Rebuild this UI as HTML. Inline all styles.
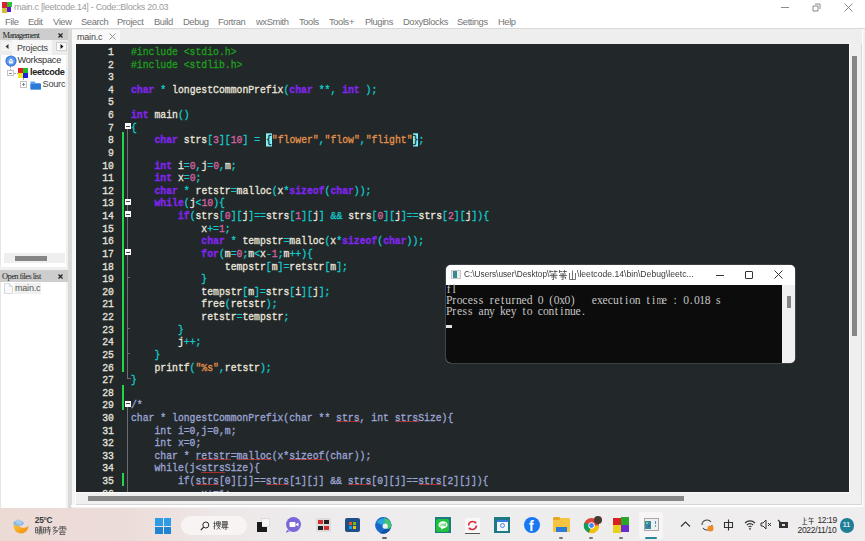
<!DOCTYPE html>
<html><head><meta charset="utf-8">
<style>
*{margin:0;padding:0;box-sizing:border-box}
html,body{width:865px;height:541px;overflow:hidden;background:#f0f0f0;font-family:"Liberation Sans",sans-serif}
.a{position:absolute}
.t{position:absolute;white-space:pre;line-height:1}
#title{left:0;top:0;width:865px;height:14px;background:#fff}
#menu{left:0;top:14px;width:865px;height:14px;background:#fff}
.mi{position:absolute;top:2.6px;font-size:9.4px;color:#767676;white-space:pre;line-height:10px;letter-spacing:-0.4px}
#code{left:76px;top:44px;width:773px;height:448px;background:#222829;overflow:hidden}
.ln{position:absolute;left:0;width:38px;text-align:right;font-family:"Liberation Mono",monospace;font-size:9.8px;color:#e6e2dc;line-height:12.62px;height:12.62px;transform:translateY(1.3px) scaleY(1.2);transform-origin:0 0;-webkit-text-stroke:0.28px currentColor}
.cl{position:absolute;left:55px;font-family:"Liberation Mono",monospace;font-size:9.78px;color:#ebe6de;line-height:12.62px;height:12.62px;white-space:pre;transform:translateY(1.3px) scaleY(1.2);transform-origin:0 0;-webkit-text-stroke:0.28px currentColor}
.k{color:#8224f0;font-weight:bold}
.o{color:#12c9cc}
.n{color:#d2629f}
.s{color:#e3904c}
.p{color:#1e9e1e}
.c{color:#9ca4d4}
.cu{color:#9ca4d4;text-decoration:underline wavy #c03030;text-decoration-thickness:1px;text-underline-offset:1px}
.cons i{position:absolute;width:5.39px;text-align:center;font-style:normal;font-family:"Liberation Serif",serif;font-size:11.6px;line-height:11px;color:#c4c4c4;white-space:pre}
</style></head><body>

<!-- title bar -->
<div id="title" class="a">
  <div class="a" style="left:1.5px;top:2px;width:5.3px;height:5.5px;background:#d82030"></div>
  <div class="a" style="left:6.8px;top:2.2px;width:4.8px;height:5px;background:#30c038"></div>
  <div class="a" style="left:1.8px;top:7.5px;width:5px;height:5.3px;background:#d0c030"></div>
  <div class="a" style="left:6.8px;top:7.2px;width:4.5px;height:4.5px;background:#5a14d8"></div>
  <div class="t" style="left:14px;top:3.3px;font-size:9px;color:#9b9b9b;letter-spacing:-0.3px">main.c [leetcode.14] - Code::Blocks 20.03</div>
  <div class="a" style="left:781px;top:7px;width:8px;height:1px;background:#8a8a8a"></div>
  <svg class="a" style="left:812px;top:3px" width="9" height="9" viewBox="0 0 9 9"><path d="M1 3h5v5h-5z M3 1h5v5" stroke="#7a7a7a" stroke-width="0.9" fill="none"/></svg>
  <svg class="a" style="left:843.5px;top:3px" width="9" height="9" viewBox="0 0 9 9"><path d="M0.5 0.5L8.5 8.5M8.5 0.5L0.5 8.5" stroke="#7a7a7a" stroke-width="0.9"/></svg>
</div>

<!-- menu -->
<div id="menu" class="a">
  <span class="mi" style="left:5px">File</span>
  <span class="mi" style="left:28px">Edit</span>
  <span class="mi" style="left:53px">View</span>
  <span class="mi" style="left:81px">Search</span>
  <span class="mi" style="left:117px">Project</span>
  <span class="mi" style="left:154px">Build</span>
  <span class="mi" style="left:183px">Debug</span>
  <span class="mi" style="left:218px">Fortran</span>
  <span class="mi" style="left:256px">wxSmith</span>
  <span class="mi" style="left:299px">Tools</span>
  <span class="mi" style="left:329px">Tools+</span>
  <span class="mi" style="left:365px">Plugins</span>
  <span class="mi" style="left:403px">DoxyBlocks</span>
  <span class="mi" style="left:457px">Settings</span>
  <span class="mi" style="left:498px">Help</span>
</div>
<div class="a" style="left:0;top:28px;width:865px;height:1px;background:#d8d8d8"></div>

<!-- left management panel -->
<div class="a" style="left:0;top:29px;width:68px;height:11px;background:#cdcdcd"></div>
<div class="t" style="left:2.5px;top:31.8px;font-family:'Liberation Serif',serif;font-size:8.4px;color:#1e1e1e;letter-spacing:-0.7px">Management</div>
<svg class="a" style="left:57.5px;top:32.5px" width="5" height="5" viewBox="0 0 5 5"><path d="M0.5 0.5L4.5 4.5M4.5 0.5L0.5 4.5" stroke="#1a1a1a" stroke-width="1.1"/></svg>
<div class="a" style="left:0;top:40px;width:68px;height:15px;background:#ececec"></div>
<div class="a" style="left:1px;top:42px;width:11px;height:9px;background:#f4f4f4"></div>
<svg class="a" style="left:5px;top:44px" width="4" height="5" viewBox="0 0 4 5"><path d="M3.5 0L0.5 2.5L3.5 5z" fill="#333"/></svg>
<div class="a" style="left:12px;top:40px;width:40px;height:15px;background:#f7f7f7"></div>
<div class="t" style="left:17px;top:43.5px;font-size:9px;color:#444;letter-spacing:-0.2px">Projects</div>
<div class="a" style="left:56px;top:42px;width:10.5px;height:9px;background:#fbfbfb;border:1px solid #d0d0d0"></div>
<svg class="a" style="left:60px;top:44px" width="4" height="5" viewBox="0 0 4 5"><path d="M0.5 0L3.5 2.5L0.5 5z" fill="#111"/></svg>
<div class="a" style="left:0;top:55px;width:68px;height:212px;background:#fff"></div>
<!-- tree -->
<div class="a" style="left:10px;top:66px;width:1px;height:8px;border-left:1px dotted #aaa"></div>
<svg class="a" style="left:4.5px;top:54.5px" width="12" height="12" viewBox="0 0 12 12"><circle cx="6" cy="6" r="5.6" fill="#3a78d8"/><circle cx="6" cy="6" r="4.4" fill="#5a98ee"/><path d="M3 6.2L6 3.4L9 6.2M4 5.6v3h4v-3" fill="#fff"/></svg>
<div class="t" style="left:17.5px;top:56px;font-size:9.2px;color:#333;letter-spacing:-0.25px">Workspace</div>
<div class="a" style="left:17.5px;top:67.5px;width:5.25px;height:5.25px;background:#e02020"></div>
<div class="a" style="left:22.75px;top:67.5px;width:5.25px;height:5.25px;background:#20c020"></div>
<div class="a" style="left:17.5px;top:72.75px;width:5.25px;height:5.25px;background:#f0e820"></div>
<div class="a" style="left:22.75px;top:72.75px;width:5.25px;height:5.25px;background:#2020e0"></div>
<div class="t" style="left:30px;top:68px;font-size:9.2px;color:#222;font-weight:bold;letter-spacing:-0.35px">leetcode</div>
<div class="a" style="left:7px;top:69.5px;width:6.5px;height:6.5px;border:1px solid #c4c4c4;background:#fff"></div>
<div class="a" style="left:8.5px;top:72.5px;width:3.5px;height:1px;background:#888"></div>
<div class="a" style="left:13.5px;top:73px;width:4px;height:1px;border-top:1px dotted #aaa"></div>
<div class="a" style="left:10px;top:77px;width:1px;height:0px"></div>
<div class="a" style="left:23px;top:78px;width:1px;height:4px;border-left:1px dotted #aaa"></div>
<svg class="a" style="left:29.5px;top:79.5px" width="12" height="10" viewBox="0 0 12 10"><path d="M0.5 1.5h4l1 1.5h5v6.5h-10z" fill="#5aa0ea"/><path d="M0.5 4h10.5v5.5h-10.5z" fill="#2a7ad8"/></svg>
<div class="t" style="left:42.5px;top:80px;font-size:9.2px;color:#444;letter-spacing:-0.25px">Sourc</div>
<div class="a" style="left:20px;top:81px;width:6.5px;height:6.5px;border:1px solid #c4c4c4;background:#fff"></div>
<div class="a" style="left:21.5px;top:84px;width:3.5px;height:1px;background:#888"></div>
<div class="a" style="left:22.75px;top:82.5px;width:1px;height:3.5px;background:#888"></div>
<!-- left hscroll -->
<div class="a" style="left:4px;top:253px;width:61px;height:10px;background:#efefef"></div>
<div class="a" style="left:15px;top:256px;width:32px;height:5px;background:#858585"></div>
<!-- open files list -->
<div class="a" style="left:0;top:270px;width:68px;height:12px;background:#cdcdcd"></div>
<div class="t" style="left:2px;top:272.8px;font-family:'Liberation Serif',serif;font-size:8.4px;color:#1e1e1e;letter-spacing:-0.55px">Open files list</div>
<svg class="a" style="left:57.5px;top:273.5px" width="5" height="5" viewBox="0 0 5 5"><path d="M0.5 0.5L4.5 4.5M4.5 0.5L0.5 4.5" stroke="#1a1a1a" stroke-width="1.1"/></svg>
<div class="a" style="left:0;top:282px;width:68px;height:226px;background:#fff"></div>
<svg class="a" style="left:3.5px;top:283px" width="9" height="11" viewBox="0 0 9 11"><path d="M0.5 0.5h5l3 3v7h-8z" fill="#fafafa" stroke="#c6ccd4" stroke-width="0.7"/><path d="M5.5 0.5v3h3" fill="#dde4ec" stroke="#c6ccd4" stroke-width="0.6"/></svg>
<div class="a" style="left:14px;top:283px;width:27px;height:11px;background:#f0f0f0"></div>
<div class="t" style="left:15px;top:284px;font-size:9px;color:#555;letter-spacing:-0.2px">main.c</div>

<!-- editor notebook -->
<div class="a" style="left:72px;top:29px;width:790px;height:15px;background:#eeeeee"></div>
<div class="a" style="left:72px;top:30px;width:48px;height:14px;background:#f9f9f9"></div>
<div class="t" style="left:77px;top:33px;font-size:9px;color:#444;letter-spacing:-0.2px">main.c</div>
<svg class="a" style="left:109px;top:33px" width="7" height="7" viewBox="0 0 7 7"><path d="M0.5 0.5L6.5 6.5M6.5 0.5L0.5 6.5" stroke="#888" stroke-width="0.9"/></svg>

<div id="code" class="a">
<div class="a" style="left:46px;top:88.34px;width:2.2px;height:239.78px;background:#22d64a"></div>
<div class="a" style="left:46px;top:340.74px;width:2.2px;height:25.24px;background:#22d64a"></div>
<div class="a" style="left:46px;top:429.08px;width:2.2px;height:12.62px;background:#22d64a"></div>
<div class="a" style="left:51px;top:81.72px;width:1px;height:252.90px;background:#6a6e70"></div>
<div class="a" style="left:51px;top:359.36px;width:1px;height:94.96px;background:#6a6e70"></div>
<div class="a" style="left:51px;top:233.16px;width:3px;height:1px;background:#6a6e70"></div>
<div class="a" style="left:51px;top:283.64px;width:3px;height:1px;background:#6a6e70"></div>
<div class="a" style="left:51px;top:308.88px;width:3px;height:1px;background:#6a6e70"></div>
<div class="a" style="left:51px;top:334.12px;width:4px;height:1px;background:#6a6e70"></div>
<div class="a" style="left:49px;top:79.02px;width:6px;height:6px;background:#fbfbfb"><div class="a" style="left:1px;top:2.5px;width:4px;height:1px;background:#444"></div></div>
<div class="a" style="left:49px;top:154.74px;width:6px;height:6px;background:#fbfbfb"><div class="a" style="left:1px;top:2.5px;width:4px;height:1px;background:#444"></div></div>
<div class="a" style="left:49px;top:167.36px;width:6px;height:6px;background:#fbfbfb"><div class="a" style="left:1px;top:2.5px;width:4px;height:1px;background:#444"></div></div>
<div class="a" style="left:49px;top:205.22px;width:6px;height:6px;background:#fbfbfb"><div class="a" style="left:1px;top:2.5px;width:4px;height:1px;background:#444"></div></div>
<div class="a" style="left:49px;top:356.66px;width:6px;height:6px;background:#fbfbfb"><div class="a" style="left:1px;top:2.5px;width:4px;height:1px;background:#444"></div></div>
<div class="a" style="left:260.45px;top:377.18px;width:23.48px;height:1.2px;background:#b83030;opacity:.9"></div>
<div class="a" style="left:319.15px;top:377.18px;width:23.48px;height:1.2px;background:#b83030;opacity:.9"></div>
<div class="a" style="left:119.57px;top:415.04px;width:35.22px;height:1.2px;background:#b83030;opacity:.9"></div>
<div class="a" style="left:160.66px;top:415.04px;width:35.22px;height:1.2px;background:#b83030;opacity:.9"></div>
<div class="a" style="left:213.49px;top:415.04px;width:35.22px;height:1.2px;background:#b83030;opacity:.9"></div>
<div class="a" style="left:125.44px;top:427.66px;width:23.48px;height:1.2px;background:#b83030;opacity:.9"></div>
<div class="a" style="left:119.57px;top:440.28px;width:23.48px;height:1.2px;background:#b83030;opacity:.9"></div>
<div class="a" style="left:190.01px;top:440.28px;width:23.48px;height:1.2px;background:#b83030;opacity:.9"></div>
<div class="a" style="left:272.19px;top:440.28px;width:23.48px;height:1.2px;background:#b83030;opacity:.9"></div>
<div class="a" style="left:342.63px;top:440.28px;width:23.48px;height:1.2px;background:#b83030;opacity:.9"></div>
<div class="ln" style="top:0.00px">1</div>
<div class="cl" style="top:0.00px"><span class="p">#include &lt;stdio.h&gt;</span></div>
<div class="ln" style="top:12.62px">2</div>
<div class="cl" style="top:12.62px"><span class="p">#include &lt;stdlib.h&gt;</span></div>
<div class="ln" style="top:25.24px">3</div>
<div class="ln" style="top:37.86px">4</div>
<div class="cl" style="top:37.86px"><span class="k">char</span> <span class="o">*</span> longestCommonPrefix<span class="o">(</span><span class="k">char</span> <span class="o">*</span><span class="o">*</span><span class="o">,</span> <span class="k">int</span> <span class="o">)</span><span class="o">;</span></div>
<div class="ln" style="top:50.48px">5</div>
<div class="ln" style="top:63.10px">6</div>
<div class="cl" style="top:63.10px"><span class="k">int</span> main<span class="o">(</span><span class="o">)</span></div>
<div class="ln" style="top:75.72px">7</div>
<div class="cl" style="top:75.72px"><span class="o">{</span></div>
<div class="ln" style="top:88.34px">8</div>
<div class="cl" style="top:88.34px">    <span class="k">char</span> strs<span class="o">[</span><span class="n">3</span><span class="o">]</span><span class="o">[</span><span class="n">10</span><span class="o">]</span> <span class="o">=</span> <span class="o" style="background:#7ff0f4;color:#1a2a2a">{</span><span class="s">&quot;flower&quot;</span><span class="o">,</span><span class="s">&quot;flow&quot;</span><span class="o">,</span><span class="s">&quot;flight&quot;</span><span class="o" style="background:#7ff0f4;color:#1a2a2a">}</span><span class="o">;</span></div>
<div class="ln" style="top:100.96px">9</div>
<div class="ln" style="top:113.58px">10</div>
<div class="cl" style="top:113.58px">    <span class="k">int</span> i<span class="o">=</span><span class="n">0</span><span class="o">,</span>j<span class="o">=</span><span class="n">0</span><span class="o">,</span>m<span class="o">;</span></div>
<div class="ln" style="top:126.20px">11</div>
<div class="cl" style="top:126.20px">    <span class="k">int</span> x<span class="o">=</span><span class="n">0</span><span class="o">;</span></div>
<div class="ln" style="top:138.82px">12</div>
<div class="cl" style="top:138.82px">    <span class="k">char</span> <span class="o">*</span> retstr<span class="o">=</span>malloc<span class="o">(</span>x<span class="o">*</span><span class="k">sizeof</span><span class="o">(</span><span class="k">char</span><span class="o">)</span><span class="o">)</span><span class="o">;</span></div>
<div class="ln" style="top:151.44px">13</div>
<div class="cl" style="top:151.44px">    <span class="k">while</span><span class="o">(</span>j<span class="o">&lt;</span><span class="n">10</span><span class="o">)</span><span class="o">{</span></div>
<div class="ln" style="top:164.06px">14</div>
<div class="cl" style="top:164.06px">        <span class="k">if</span><span class="o">(</span>strs<span class="o">[</span><span class="n">0</span><span class="o">]</span><span class="o">[</span>j<span class="o">]</span><span class="o">=</span><span class="o">=</span>strs<span class="o">[</span><span class="n">1</span><span class="o">]</span><span class="o">[</span>j<span class="o">]</span> <span class="o">&amp;</span><span class="o">&amp;</span> strs<span class="o">[</span><span class="n">0</span><span class="o">]</span><span class="o">[</span>j<span class="o">]</span><span class="o">=</span><span class="o">=</span>strs<span class="o">[</span><span class="n">2</span><span class="o">]</span><span class="o">[</span>j<span class="o">]</span><span class="o">)</span><span class="o">{</span></div>
<div class="ln" style="top:176.68px">15</div>
<div class="cl" style="top:176.68px">            x<span class="o">+</span><span class="o">=</span><span class="n">1</span><span class="o">;</span></div>
<div class="ln" style="top:189.30px">16</div>
<div class="cl" style="top:189.30px">            <span class="k">char</span> <span class="o">*</span> tempstr<span class="o">=</span>malloc<span class="o">(</span>x<span class="o">*</span><span class="k">sizeof</span><span class="o">(</span><span class="k">char</span><span class="o">)</span><span class="o">)</span><span class="o">;</span></div>
<div class="ln" style="top:201.92px">17</div>
<div class="cl" style="top:201.92px">            <span class="k">for</span><span class="o">(</span>m<span class="o">=</span><span class="n">0</span><span class="o">;</span>m<span class="o">&lt;</span>x<span class="o">-</span><span class="n">1</span><span class="o">;</span>m<span class="o">+</span><span class="o">+</span><span class="o">)</span><span class="o">{</span></div>
<div class="ln" style="top:214.54px">18</div>
<div class="cl" style="top:214.54px">                tempstr<span class="o">[</span>m<span class="o">]</span><span class="o">=</span>retstr<span class="o">[</span>m<span class="o">]</span><span class="o">;</span></div>
<div class="ln" style="top:227.16px">19</div>
<div class="cl" style="top:227.16px">            <span class="o">}</span></div>
<div class="ln" style="top:239.78px">20</div>
<div class="cl" style="top:239.78px">            tempstr<span class="o">[</span>m<span class="o">]</span><span class="o">=</span>strs<span class="o">[</span>i<span class="o">]</span><span class="o">[</span>j<span class="o">]</span><span class="o">;</span></div>
<div class="ln" style="top:252.40px">21</div>
<div class="cl" style="top:252.40px">            free<span class="o">(</span>retstr<span class="o">)</span><span class="o">;</span></div>
<div class="ln" style="top:265.02px">22</div>
<div class="cl" style="top:265.02px">            retstr<span class="o">=</span>tempstr<span class="o">;</span></div>
<div class="ln" style="top:277.64px">23</div>
<div class="cl" style="top:277.64px">        <span class="o">}</span></div>
<div class="ln" style="top:290.26px">24</div>
<div class="cl" style="top:290.26px">        j<span class="o">+</span><span class="o">+</span><span class="o">;</span></div>
<div class="ln" style="top:302.88px">25</div>
<div class="cl" style="top:302.88px">    <span class="o">}</span></div>
<div class="ln" style="top:315.50px">26</div>
<div class="cl" style="top:315.50px">    printf<span class="o">(</span><span class="s">&quot;%s&quot;</span><span class="o">,</span>retstr<span class="o">)</span><span class="o">;</span></div>
<div class="ln" style="top:328.12px">27</div>
<div class="cl" style="top:328.12px"><span class="o">}</span></div>
<div class="ln" style="top:340.74px">28</div>
<div class="ln" style="top:353.36px">29</div>
<div class="cl" style="top:353.36px"><span class="c">/*</span></div>
<div class="ln" style="top:365.98px">30</div>
<div class="cl" style="top:365.98px"><span class="c">char * longestCommonPrefix(char ** strs, int strsSize){</span></div>
<div class="ln" style="top:378.60px">31</div>
<div class="cl" style="top:378.60px"><span class="c">    int i=0,j=0,m;</span></div>
<div class="ln" style="top:391.22px">32</div>
<div class="cl" style="top:391.22px"><span class="c">    int x=0;</span></div>
<div class="ln" style="top:403.84px">33</div>
<div class="cl" style="top:403.84px"><span class="c">    char * retstr=malloc(x*sizeof(char));</span></div>
<div class="ln" style="top:416.46px">34</div>
<div class="cl" style="top:416.46px"><span class="c">    while(j&lt;strsSize){</span></div>
<div class="ln" style="top:429.08px">35</div>
<div class="cl" style="top:429.08px"><span class="c">        if(strs[0][j]==strs[1][j] &amp;&amp; strs[0][j]==strs[2][j]){</span></div>
<div class="ln" style="top:441.70px">36</div>
<div class="cl" style="top:441.70px"><span class="c">            x+=1;</span></div>
</div><!--endcode-->

<!-- vscroll -->
<div class="a" style="left:849px;top:44px;width:12px;height:448px;background:#efefef"></div>
<div class="a" style="left:852px;top:56px;width:5px;height:280px;background:#878787"></div>
<!-- hscroll -->
<div class="a" style="left:76px;top:492px;width:773px;height:10px;background:#efefef"></div>
<div class="a" style="left:88px;top:496px;width:596px;height:5px;background:#878787"></div>

<!-- frame lines -->
<div class="a" style="left:0;top:55px;width:1px;height:212px;background:#e6e6e6"></div>
<div class="a" style="left:0;top:282px;width:1px;height:226px;background:#e6e6e6"></div>
<div class="a" style="left:65.5px;top:55px;width:2px;height:212px;background:#f1f1f1"></div>
<div class="a" style="left:65.5px;top:282px;width:2px;height:226px;background:#f1f1f1"></div>
<div class="a" style="left:67.5px;top:29px;width:4.2px;height:479px;background:#d9d9d9"></div>
<div class="a" style="left:71.7px;top:44px;width:3px;height:461px;background:#f6f6f6"></div>
<div class="a" style="left:74.7px;top:44px;width:1.3px;height:461px;background:#ffffff"></div>
<div class="a" style="left:849px;top:44px;width:1px;height:449px;background:#fbfbfb"></div>
<div class="a" style="left:76px;top:492px;width:774px;height:1px;background:#fbfbfb"></div>
<div class="a" style="left:861px;top:44px;width:1px;height:461px;background:#d6d6d6"></div>
<div class="a" style="left:76px;top:504px;width:786px;height:1px;background:#d6d6d6"></div>
<div class="a" style="left:862px;top:29px;width:1px;height:477px;background:#ffffff"></div>
<div class="a" style="left:71px;top:505px;width:792px;height:1.5px;background:#ffffff"></div>
<!-- console window -->
<div class="a" style="left:445.5px;top:265px;width:349.5px;height:97.5px;border-radius:5px;background:#f0f0f0;overflow:hidden;box-shadow:0 0 0 0.6px #55585a">
  <div class="a" style="left:0;top:0;width:350px;height:19.6px;background:#ffffff"></div>
  <div class="a" style="left:0;top:19.6px;width:336.5px;height:78px;background:#0c0c0c"></div>
  <div class="a" style="left:336.5px;top:19.6px;width:13px;height:78px;background:#f0f0f0"></div>
  <div class="a" style="left:341.5px;top:31px;width:4px;height:12px;background:#858585"></div>
  <!-- icon -->
  <div class="a" style="left:5.5px;top:4.5px;width:10px;height:9.5px;background:#ececec;border:1px solid #c8c8c8"></div>
  <div class="a" style="left:7px;top:6px;width:4px;height:6.5px;background:#3a8a90"></div>
  <div class="t" style="left:18.3px;top:4.3px;font-size:9.6px;color:#3a3a3a;transform:scaleX(0.86);transform-origin:0 0">C:\Users\user\Desktop\</div>
  <svg class="a" style="left:103.5px;top:5px" width="28" height="10" viewBox="0 0 28 10"><g stroke="#444" stroke-width="0.75" fill="none"><path d="M0.5 1.5h3.5M4.5 1.5h4M1 0v3M6 0v3M1.5 4h6M0.5 5.5h8M4.5 3.5v6.5M2 7h5v2M3 9.5l1.5 .5"/><path d="M10 1.5h3.5M14 1.5h4M10.5 0v3M15.5 0v3M11 4h6M10 5.5h8M14 3.5v6.5M11.5 7h5v2M12.5 9.5l1.5 .5"/><path d="M20.5 3v6.5h6v-6.5M23.5 0.5v9"/></g></svg>
  <div class="t" style="left:131px;top:4.3px;font-size:9.6px;color:#3a3a3a;transform:scaleX(0.9);transform-origin:0 0">\leetcode.14\bin\Debug\leetc...</div>
  <div class="a" style="left:270px;top:9.5px;width:8px;height:1px;background:#333"></div>
  <div class="a" style="left:299px;top:5.5px;width:8px;height:8px;border:1px solid #333;border-radius:1px"></div>
  <svg class="a" style="left:328px;top:5px" width="9" height="9" viewBox="0 0 9 9"><path d="M0.5 0.5L8.5 8.5M8.5 0.5L0.5 8.5" stroke="#333" stroke-width="1"/></svg>
  <div class="a cons" style="left:0;top:19.3px;width:336px;height:40px"><i style="left:0.50px;top:0px">f</i><i style="left:5.89px;top:0px">l</i><i style="left:0.50px;top:11px">P</i><i style="left:5.89px;top:11px">r</i><i style="left:11.28px;top:11px">o</i><i style="left:16.67px;top:11px">c</i><i style="left:22.06px;top:11px">e</i><i style="left:27.45px;top:11px">s</i><i style="left:32.84px;top:11px">s</i><i style="left:43.62px;top:11px">r</i><i style="left:49.01px;top:11px">e</i><i style="left:54.40px;top:11px">t</i><i style="left:59.79px;top:11px">u</i><i style="left:65.18px;top:11px">r</i><i style="left:70.57px;top:11px">n</i><i style="left:75.96px;top:11px">e</i><i style="left:81.35px;top:11px">d</i><i style="left:92.13px;top:11px">0</i><i style="left:102.91px;top:11px">(</i><i style="left:108.30px;top:11px">0</i><i style="left:113.69px;top:11px">x</i><i style="left:119.08px;top:11px">0</i><i style="left:124.47px;top:11px">)</i><i style="left:146.03px;top:11px">e</i><i style="left:151.42px;top:11px">x</i><i style="left:156.81px;top:11px">e</i><i style="left:162.20px;top:11px">c</i><i style="left:167.59px;top:11px">u</i><i style="left:172.98px;top:11px">t</i><i style="left:178.37px;top:11px">i</i><i style="left:183.76px;top:11px">o</i><i style="left:189.15px;top:11px">n</i><i style="left:199.93px;top:11px">t</i><i style="left:205.32px;top:11px">i</i><i style="left:210.71px;top:11px;transform:scaleX(0.72)">m</i><i style="left:216.10px;top:11px">e</i><i style="left:226.88px;top:11px">:</i><i style="left:237.66px;top:11px">0</i><i style="left:243.05px;top:11px">.</i><i style="left:248.44px;top:11px">0</i><i style="left:253.83px;top:11px">1</i><i style="left:259.22px;top:11px">8</i><i style="left:270.00px;top:11px">s</i><i style="left:0.50px;top:22px">P</i><i style="left:5.89px;top:22px">r</i><i style="left:11.28px;top:22px">e</i><i style="left:16.67px;top:22px">s</i><i style="left:22.06px;top:22px">s</i><i style="left:32.84px;top:22px">a</i><i style="left:38.23px;top:22px">n</i><i style="left:43.62px;top:22px">y</i><i style="left:54.40px;top:22px">k</i><i style="left:59.79px;top:22px">e</i><i style="left:65.18px;top:22px">y</i><i style="left:75.96px;top:22px">t</i><i style="left:81.35px;top:22px">o</i><i style="left:92.13px;top:22px">c</i><i style="left:97.52px;top:22px">o</i><i style="left:102.91px;top:22px">n</i><i style="left:108.30px;top:22px">t</i><i style="left:113.69px;top:22px">i</i><i style="left:119.08px;top:22px">n</i><i style="left:124.47px;top:22px">u</i><i style="left:129.86px;top:22px">e</i><i style="left:135.25px;top:22px">.</i></div>
  <div class="a" style="left:0.5px;top:60px;width:5.5px;height:2.5px;background:#e0e0e0"></div>
</div>

<!-- taskbar -->
<div class="a" style="left:0;top:508px;width:865px;height:33px;background:linear-gradient(90deg,#ecdad5 0%,#ecdcd8 14%,#ede6e6 24%,#eeebec 34%,#eeedee 55%,#efedee 100%)"></div>
<!-- weather -->
<svg class="a" style="left:12px;top:515.5px" width="18" height="18" viewBox="0 0 18 18">
  <defs><linearGradient id="mg" x1="0" y1="0" x2="1" y2="1"><stop offset="0" stop-color="#ffd040"/><stop offset="1" stop-color="#f08a10"/></linearGradient></defs>
  <mask id="mm"><rect width="18" height="18" fill="#fff"/><circle cx="11.5" cy="6" r="6" fill="#000"/></mask><circle cx="9" cy="10" r="7.4" fill="url(#mg)" mask="url(#mm)"/>
  <ellipse cx="6.5" cy="7.2" rx="5.2" ry="2.8" fill="#8cb8e6"/>
  <ellipse cx="7" cy="6" rx="2.8" ry="2.4" fill="#a8cdf2"/>
</svg>
<div class="t" style="left:34.8px;top:515.8px;font-size:8.4px;font-weight:bold;color:#3a3a3a;letter-spacing:-0.3px">25°C</div>
<svg class="a" style="left:35px;top:526px" width="32" height="9" viewBox="0 0 32 9"><g stroke="#505050" stroke-width="0.8" fill="none">
<path d="M0.5 1.5h2v5.5h-2zM0.5 4.2h2M3.5 1h4M4 2.2h3M3.3 3.4h4.4M5.5 0.3v3.1M4 4.5h3v4M4 5.7h3M4 6.9h3M4 4.5v4.3"/>
<path d="M8.5 1.5h2v5.5h-2zM8.5 4.2h2M11.5 1.6h4M13.5 0.3v3M11.2 3.3h4.6M11.3 5h4.5M14.5 4v4.6l-0.8-0.3M12.2 6.3l0.7 0.8"/>
<path d="M19.5 0.5l-2 1.8M18.5 1.3h3l-3.5 3M19.2 2.3l1 0.6M20.5 4l-2.5 2M19.7 4.6h3.3l-5 3.9M20.3 5.8l1 0.6"/>
<path d="M24.3 0.7h6.4M24 2v2.2M24 2h7v2.2M27.5 0.7v3.6M25 2.8h1.4M28.6 2.8h1.4M25 5h5M24.2 6.3h6.6M26.5 6.5l-1.7 2h5.2M28.8 7.3l1 1.2"/>
</g></svg>
<!-- start -->
<div class="a" style="left:155px;top:518px;width:7.5px;height:7.5px;background:#2d9be6"></div>
<div class="a" style="left:163.5px;top:518px;width:7.5px;height:7.5px;background:#2d9be6"></div>
<div class="a" style="left:155px;top:526.5px;width:7.5px;height:7.5px;background:#1f84d2"></div>
<div class="a" style="left:163.5px;top:526.5px;width:7.5px;height:7.5px;background:#1f84d2"></div>
<!-- search pill -->
<div class="a" style="left:181px;top:515.5px;width:66px;height:19.5px;border-radius:10px;background:#f8f4f3"></div>
<svg class="a" style="left:200px;top:520.5px" width="10" height="10" viewBox="0 0 10 10"><circle cx="5.8" cy="4" r="3" stroke="#2a2a2a" stroke-width="1" fill="none"/><path d="M3.7 6.1L0.8 9" stroke="#2a2a2a" stroke-width="1.1"/></svg>
<svg class="a" style="left:213px;top:521px" width="16" height="9" viewBox="0 0 16 9"><g stroke="#3a3a3a" stroke-width="0.7" fill="none">
<path d="M0.3 2.5h2.4M1.5 0.3v7.8l-0.7-0.5M0.3 5.8l2.4-1.2M3.5 0.8h3.8v3.3h-3.8zM3.5 2.4h3.8M5.4 0.3v4M3.8 5h3.5l-3.5 3.5M4.5 5.5l2.8 3"/>
<path d="M8.8 0.5h5.5v2.3h-5.5M9 1.6h5.3M8.6 3.6h6.5M9.5 4.3h4.2v1.6h-4.2zM8.3 6.6h7.2M13 5.5v3.3l-0.9-0.4M10.3 7.2l0.7 0.9"/>
</g></svg>
<!-- task view -->
<div class="a" style="left:257px;top:522px;width:10px;height:10px;background:#1a1a1a"></div>
<div class="a" style="left:261px;top:518px;width:9px;height:9px;background:#f4f4f4;border:1px solid #ddd"></div>
<div class="a" style="left:257px;top:522px;width:5px;height:10px;background:#1a1a1a"></div>
<!-- teams chat -->
<svg class="a" style="left:285px;top:517px" width="17" height="16" viewBox="0 0 17 16"><circle cx="8.5" cy="7.5" r="7.5" fill="#7b68d8"/><path d="M2 13l-1 3l4-2z" fill="#7b68d8"/><rect x="4.5" y="5" width="6" height="5" rx="1" fill="#fff"/><path d="M10.5 7.5l3-2v4z" fill="#fff"/></svg>
<!-- red/black app -->
<div class="a" style="left:316px;top:518px;width:15px;height:14px;background:#dcdcdc;border-radius:2px"></div>
<div class="a" style="left:318px;top:520px;width:5px;height:4px;background:#d23030"></div>
<div class="a" style="left:324px;top:520px;width:5px;height:4px;background:#222"></div>
<div class="a" style="left:318px;top:526px;width:5px;height:4px;background:#222"></div>
<div class="a" style="left:324px;top:526px;width:5px;height:4px;background:#d23030"></div>
<!-- store -->
<div class="a" style="left:345px;top:518px;width:15px;height:14px;background:#1e4f86;border-radius:2px"></div>
<div class="a" style="left:349px;top:522px;width:3px;height:3px;background:#f25022"></div>
<div class="a" style="left:353px;top:522px;width:3px;height:3px;background:#7fba00"></div>
<div class="a" style="left:349px;top:526px;width:3px;height:3px;background:#00a4ef"></div>
<div class="a" style="left:353px;top:526px;width:3px;height:3px;background:#ffb900"></div>
<!-- edge -->
<svg class="a" style="left:375px;top:516.8px" width="17" height="17" viewBox="0 0 17 17"><circle cx="8.3" cy="8.3" r="8.2" fill="#1766c8"/><path d="M1.5 5.5A8.2 8.2 0 0 1 16.4 7.5C16.4 11 13 12.5 11 11.5L10 9z" fill="#2aa7d8"/><path d="M9 1A8 8 0 0 1 16.4 8C16.4 11 13.5 12.5 11.5 12L10.5 8z" fill="#45c46a"/><circle cx="10.2" cy="9.2" r="2.6" fill="#f0eeee"/><path d="M10.5 11.8C12 12.3 14.5 12.5 15.8 11A8.2 8.2 0 0 1 4 15.8C7 15.5 9 13.5 10.5 11.8z" fill="#0e4fa8"/></svg>
<div class="a" style="left:382px;top:536.5px;width:4.5px;height:2px;background:#666;border-radius:1px"></div>
<!-- line -->
<div class="a" style="left:434.5px;top:517px;width:16px;height:16px;background:#1d7a82"></div>
<div class="a" style="left:436px;top:518.5px;width:13px;height:13px;background:#1fc23a;border-radius:2px"></div>
<svg class="a" style="left:436.5px;top:519.5px" width="12" height="11" viewBox="0 0 12 11"><ellipse cx="6" cy="4.8" rx="4.6" ry="3.6" fill="#fff"/><path d="M4 7.5l0.5 2.3l2.3-1.9z" fill="#fff"/><g stroke="#1fc23a" stroke-width="0.5" fill="none"><path d="M3 3.5v2.5h1M4.7 3.5v2.5M5.8 6v-2.5l1.5 2.5v-2.5M9.2 3.5h-1.1v2.5h1.1M8.1 4.7h1"/></g></svg>
<!-- red refresh -->
<div class="a" style="left:465px;top:517.5px;width:15px;height:15px;background:#f8f8f8;box-shadow:0 1px 0 #555"></div>
<svg class="a" style="left:467px;top:519.5px" width="11" height="11" viewBox="0 0 11 11"><path d="M1.6 5.5a3.9 3.9 0 0 1 7-2.4M9.4 5.5a3.9 3.9 0 0 1-7 2.4" stroke="#de2a3a" stroke-width="1.6" fill="none"/><path d="M7.3 1.5l2.2 0.2l-0.4 2.3zM3.7 9.5l-2.2-0.2l0.4-2.3z" fill="#de2a3a"/></svg>
<!-- calendar -->
<div class="a" style="left:494px;top:517px;width:16px;height:16px;background:#1d7a82"></div>
<div class="a" style="left:496.5px;top:519.5px;width:11px;height:11px;background:#f4f8fc"></div>
<div class="a" style="left:496.5px;top:519.5px;width:11px;height:2.5px;background:#3a7ae0"></div>
<div class="a" style="left:499.5px;top:523px;width:5px;height:5px;border:1px solid #4a8ae8;border-radius:50%"></div>
<!-- facebook -->
<div class="a" style="left:524px;top:517px;width:16px;height:16px;border-radius:50%;background:#1877f2"></div>
<div class="t" style="left:529px;top:519px;font-size:14px;font-weight:bold;color:#fff">f</div>
<!-- folder -->
<div class="a" style="left:553px;top:518px;width:17px;height:14px;background:#f5c542;border-radius:1px"></div>
<div class="a" style="left:553px;top:516.5px;width:7px;height:3px;background:#e6a820;border-radius:1px"></div>
<div class="a" style="left:556px;top:527px;width:11px;height:5px;background:#2a7ad8"></div>
<div class="a" style="left:559px;top:537px;width:4px;height:1.5px;background:#777;border-radius:1px"></div>
<!-- chrome -->
<svg class="a" style="left:583px;top:516px" width="20" height="18" viewBox="0 0 20 18"><circle cx="8.5" cy="9.5" r="7.5" fill="#db4437"/><path d="M8.5 9.5L1.5 6.5A7.5 7.5 0 0 0 6 16.8z" fill="#0f9d58"/><path d="M8.5 9.5L6 16.8A7.5 7.5 0 0 0 16 9.5z" fill="#f4c20d"/><circle cx="8.5" cy="9.5" r="3.2" fill="#fff"/><circle cx="8.5" cy="9.5" r="2.4" fill="#4285f4"/><circle cx="15" cy="4" r="4" fill="#4a3b30"/></svg>
<div class="a" style="left:589px;top:537px;width:4px;height:1.5px;background:#777;border-radius:1px"></div>
<!-- codeblocks -->
<div class="a" style="left:613px;top:518px;width:8px;height:7px;background:#d82020"></div>
<div class="a" style="left:621px;top:517px;width:8px;height:8px;background:#28a828"></div>
<div class="a" style="left:613px;top:525px;width:8px;height:8px;background:#e8d020"></div>
<div class="a" style="left:621px;top:525px;width:8px;height:7px;background:#6a2ad0"></div>
<div class="a" style="left:619px;top:537px;width:4px;height:1.5px;background:#777;border-radius:1px"></div>
<!-- active console app -->
<div class="a" style="left:639px;top:512px;width:24px;height:27px;background:#f7f5f5;border-radius:3px"></div>
<div class="a" style="left:643.5px;top:518px;width:15px;height:13px;background:#eef0f0;border:1px solid #a8aaaa"></div>
<div class="a" style="left:645px;top:520.5px;width:5.5px;height:8px;background:#3a8a9a"></div>
<div class="a" style="left:646px;top:522px;width:2px;height:2px;background:#7ac0b0"></div>
<div class="a" style="left:647.5px;top:525px;width:2px;height:2px;background:#4060c0"></div>
<div class="a" style="left:654.5px;top:521px;width:1.5px;height:3px;background:#5a8ad0"></div>
<div class="a" style="left:654.5px;top:525px;width:1.5px;height:2px;background:#60b090"></div>
<div class="a" style="left:645px;top:536.5px;width:12px;height:2px;background:#2b8a9a;border-radius:1px"></div>
<!-- tray -->
<svg class="a" style="left:680px;top:520px" width="11" height="8" viewBox="0 0 11 8"><path d="M1 6.5L5.5 2L10 6.5" stroke="#333" stroke-width="1.1" fill="none"/></svg>
<svg class="a" style="left:700px;top:518px" width="14" height="14" viewBox="0 0 14 14"><path d="M2 7a5 5 0 0 1 9-3M12 7a5 5 0 0 1-9 3" stroke="#444" stroke-width="1.1" fill="none"/><circle cx="10.5" cy="10.5" r="3" fill="#f28a1e"/></svg>
<svg class="a" style="left:723px;top:519px" width="11" height="12" viewBox="0 0 11 12"><path d="M1.5 3.5h8v5h-8zM5.5 0.5v11" stroke="#333" stroke-width="1.1" fill="none"/></svg>
<svg class="a" style="left:744px;top:519px" width="12" height="11" viewBox="0 0 12 11"><path d="M1 4a7 7 0 0 1 10 0M2.8 6a4.5 4.5 0 0 1 6.4 0M4.5 8a2 2 0 0 1 3 0" stroke="#333" stroke-width="1.1" fill="none"/><circle cx="6" cy="9.8" r="0.9" fill="#333"/></svg>
<svg class="a" style="left:760px;top:519px" width="12" height="11" viewBox="0 0 12 11"><path d="M1 4h2l3-3v9l-3-3h-2z" stroke="#333" stroke-width="1" fill="none"/><path d="M8 4l3 3M11 4l-3 3" stroke="#333" stroke-width="1"/></svg>
<svg class="a" style="left:777px;top:519px" width="12" height="11" viewBox="0 0 12 11"><rect x="2" y="3" width="9" height="6" fill="#333"/><path d="M1 1l3 3" stroke="#333" stroke-width="1.2"/><rect x="5" y="5" width="3" height="2" fill="#ddd"/></svg>
<svg class="a" style="left:802px;top:516.5px" width="13" height="8" viewBox="0 0 17 8" preserveAspectRatio="none"><g stroke="#3a3a3a" stroke-width="0.75" fill="none">
<path d="M3 0.3v7.2M3 3.2h2.8M0.3 7.5h6.6"/>
<path d="M10 0.3l-1 2.3M9.5 1.6h5.5M12.3 1.6v6.1M8.8 4.5h6.6"/>
</g></svg>
<div class="t" style="left:817.5px;top:515.5px;font-size:8.5px;color:#2a2a2a;letter-spacing:-0.4px">12:19</div>
<div class="t" style="left:797.5px;top:526px;font-size:8.5px;color:#2a2a2a;letter-spacing:-0.3px">2022/11/10</div>
<div class="a" style="left:839.5px;top:518px;width:14.5px;height:14.5px;border-radius:50%;background:#1f7f97"></div>
<div class="t" style="left:842.5px;top:521px;font-size:8px;color:#fff;letter-spacing:-0.4px">11</div>

</body></html>
